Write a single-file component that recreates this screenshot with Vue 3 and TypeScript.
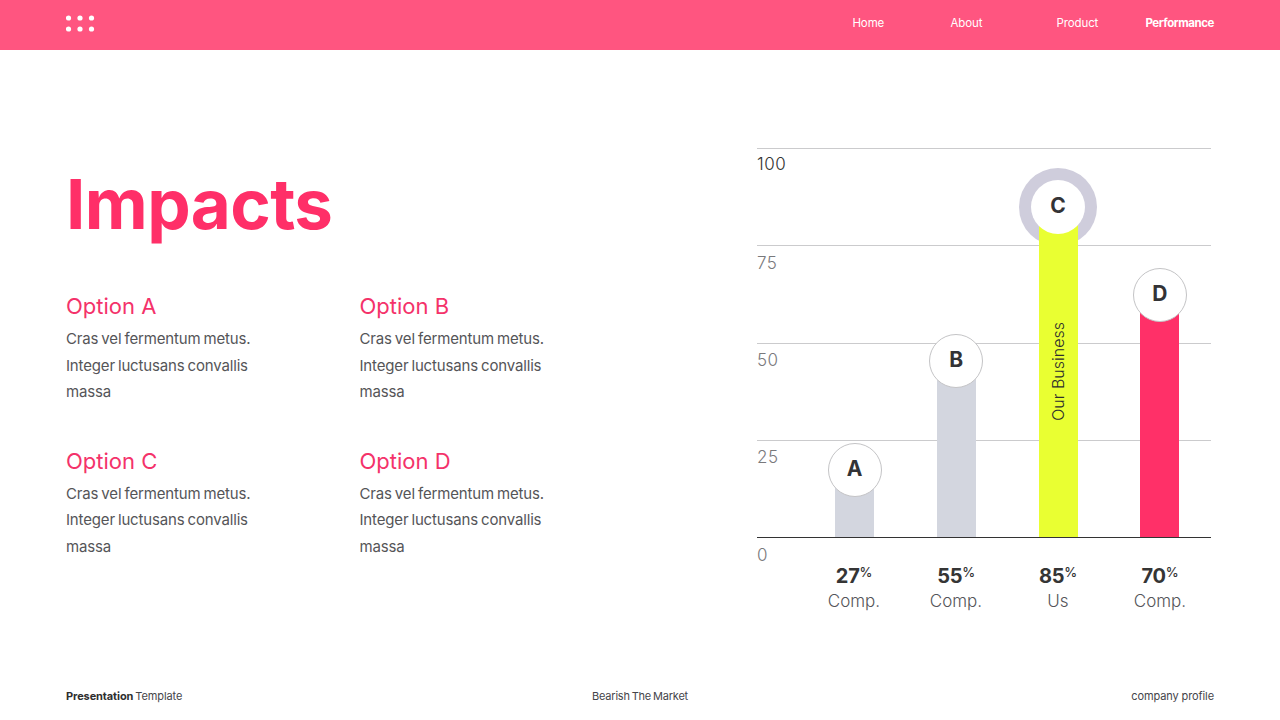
<script setup lang="ts">
interface Bar { letter: string; height: number; color: string; value: number; name: string; featured?: boolean; caption?: string }
const navItems = [
  { label: 'Home', cls: 'w-home' },
  { label: 'About', cls: 'w-about' },
  { label: 'Product', cls: 'w-product' },
  { label: 'Performance', cls: 'active' },
]
const options = ['A', 'B', 'C', 'D']
const axis = [100, 75, 50, 25, 0]
const bars: Bar[] = [
  { letter: 'A', height: 67, color: '#d3d6df', value: 27, name: 'Comp.' },
  { letter: 'B', height: 176, color: '#d3d6df', value: 55, name: 'Comp.' },
  { letter: 'C', height: 330, color: '#e9ff32', value: 85, name: 'Us', featured: true, caption: 'Our Business' },
  { letter: 'D', height: 242, color: '#ff3068', value: 70, name: 'Comp.' },
]
</script>

<template>
  <div class="page">
    <header class="topbar">
      <svg class="logo" width="30" height="18" viewBox="0 0 30 18" aria-hidden="true">
        <circle v-for="c in [[2.5,3],[14,3],[25.5,3],[2.5,14],[14,14],[25.5,14]]" :key="c.join()" :cx="c[0]" :cy="c[1]" r="2.6" fill="#fff" />
      </svg>
      <nav class="nav">
        <span v-for="n in navItems" :key="n.label" :class="n.cls">{{ n.label }}</span>
      </nav>
    </header>

    <main class="main">
      <section class="left">
        <h1 class="title">Impacts</h1>
        <div class="options">
          <article v-for="o in options" :key="o" class="option">
            <h2>Option {{ o }}</h2>
            <p>Cras vel fermentum metus. Integer luctusans convallis massa</p>
          </article>
        </div>
      </section>

      <section class="chart">
        <div class="plot">
          <div class="rows">
            <div v-for="(a, i) in axis" :key="a" class="row" :class="{ first: i === 0, base: a === 0 }">{{ a }}</div>
          </div>
          <div class="bars">
            <div v-for="b in bars" :key="b.letter" class="slot">
              <div class="bar" :style="{ height: b.height + 'px', background: b.color }">
                <span v-if="b.featured" class="ring"></span>
                <span v-if="b.caption" class="caption">{{ b.caption }}</span>
                <span class="bubble" :class="{ featured: b.featured }">{{ b.letter }}</span>
              </div>
            </div>
          </div>
        </div>
        <div class="stats">
          <div v-for="b in bars" :key="b.letter" class="stat">
            <div class="value">{{ b.value }}<sup>%</sup></div>
            <div class="name">{{ b.name }}</div>
          </div>
        </div>
      </section>
    </main>

    <footer class="footer">
      <span class="tight"><b>Presentation</b> Template</span>
      <span class="tight center">Bearish The Market</span>
      <span class="end">company profile</span>
    </footer>
  </div>
</template>

<style scoped>
.page {
  width: 1280px;
  height: 720px;
  display: flex;
  flex-direction: column;
  overflow: hidden;
  background: #fff;
  font-family: Inter, "Liberation Sans", sans-serif;
  color: #555558;
}
.topbar {
  height: 50px;
  flex: none;
  background: #ff5580;
  display: flex;
  align-items: center;
  justify-content: space-between;
  padding: 0 66px;
}
.logo { display: block; margin-top: -2px; }
.nav {
  display: flex;
  font-size: 11.5px;
  color: #fff;
  letter-spacing: -0.1px;
  margin-top: -4px;
}
.w-home { width: 98px; }
.w-about { width: 106px; }
.w-product { width: 89px; }
.active { font-weight: 700; letter-spacing: -0.42px; }
.main {
  flex: 1;
  display: flex;
  justify-content: space-between;
  padding: 98px 69px 0 66px;
}
.left { width: 560px; }
.title {
  margin: 16px 0 0;
  font-size: 69px;
  line-height: 80px;
  font-weight: 700;
  letter-spacing: -0.6px;
  color: #ff2f68;
}
.options {
  margin-top: 48px;
  display: grid;
  grid-template-columns: 293.5px 200px;
  row-gap: 41px;
}
.option h2 {
  margin: 0;
  font-size: 22px;
  line-height: 28px;
  font-weight: 400;
  color: #f4326a;
  letter-spacing: 0;
}
.option p {
  margin: 6px 0 0;
  font-size: 15px;
  line-height: 26.5px;
  letter-spacing: -0.16px;
  word-spacing: -1px;
  width: 195px;
}
.chart { width: 454px; }
.plot { position: relative; isolation: isolate; }
.row {
  height: 97.25px;
  box-sizing: border-box;
  border-top: 1px solid #cbcbcd;
  padding-top: 5.5px;
  font-size: 17px;
  line-height: 22px;
  font-weight: 300;
  letter-spacing: 0.5px;
  color: #79797c;
}
.row.first { color: #333; padding-top: 4px; }
.row.base {
  height: 27px;
  border-top-color: #333;
  padding-top: 6px;
}
.bars {
  position: absolute;
  left: 46.7px;
  right: 0.3px;
  top: 0;
  height: 389px;
  display: grid;
  grid-template-columns: repeat(4, 1fr);
  align-items: end;
}
.slot { display: flex; justify-content: center; }
.bar { position: relative; width: 39px; }
.ring {
  position: absolute;
  left: 50%;
  top: -39px;
  width: 78px;
  height: 78px;
  margin-left: -39px;
  border-radius: 50%;
  background: #cfcddc;
  z-index: -1;
}
.caption {
  position: absolute;
  left: 50%;
  bottom: 116px;
  transform: translateX(-50%) rotate(180deg);
  writing-mode: vertical-rl;
  font-size: 16px;
  line-height: 20px;
  font-weight: 300;
  white-space: nowrap;
  color: #2d2d2d;
}
.bubble {
  position: absolute;
  left: 50%;
  top: -27px;
  width: 54px;
  height: 54px;
  margin-left: -27px;
  box-sizing: border-box;
  border: 1px solid #c4c4c6;
  border-radius: 50%;
  background: #fff;
  display: flex;
  align-items: center;
  justify-content: center;
  font-size: 21px;
  font-weight: 700;
  color: #333336;
  padding-bottom: 4px;
}
.bubble.featured { border: none; padding-bottom: 4px; }
.stats {
  display: grid;
  grid-template-columns: repeat(4, 1fr);
  padding-left: 46px;
  text-align: center;
}
.value {
  font-size: 20px;
  line-height: 24px;
  font-weight: 700;
  color: #353535;
  letter-spacing: -0.3px;
}
.value sup {
  font-size: 13px;
  font-weight: 500;
  line-height: 0;
  vertical-align: 6px;
}
.name {
  font-size: 17px;
  line-height: 26px;
  font-weight: 300;
  color: #55555a;
}
.footer {
  flex: none;
  display: grid;
  grid-template-columns: 1fr auto 1fr;
  padding: 0 66px 17px;
  font-size: 11px;
  line-height: 14px;
  letter-spacing: -0.1px;
  color: #45454a;
}
.tight { word-spacing: -1px; }
.center { letter-spacing: -0.2px; }
.end { text-align: right; }
.footer b { font-weight: 700; color: #2e2e2e; }
</style>
